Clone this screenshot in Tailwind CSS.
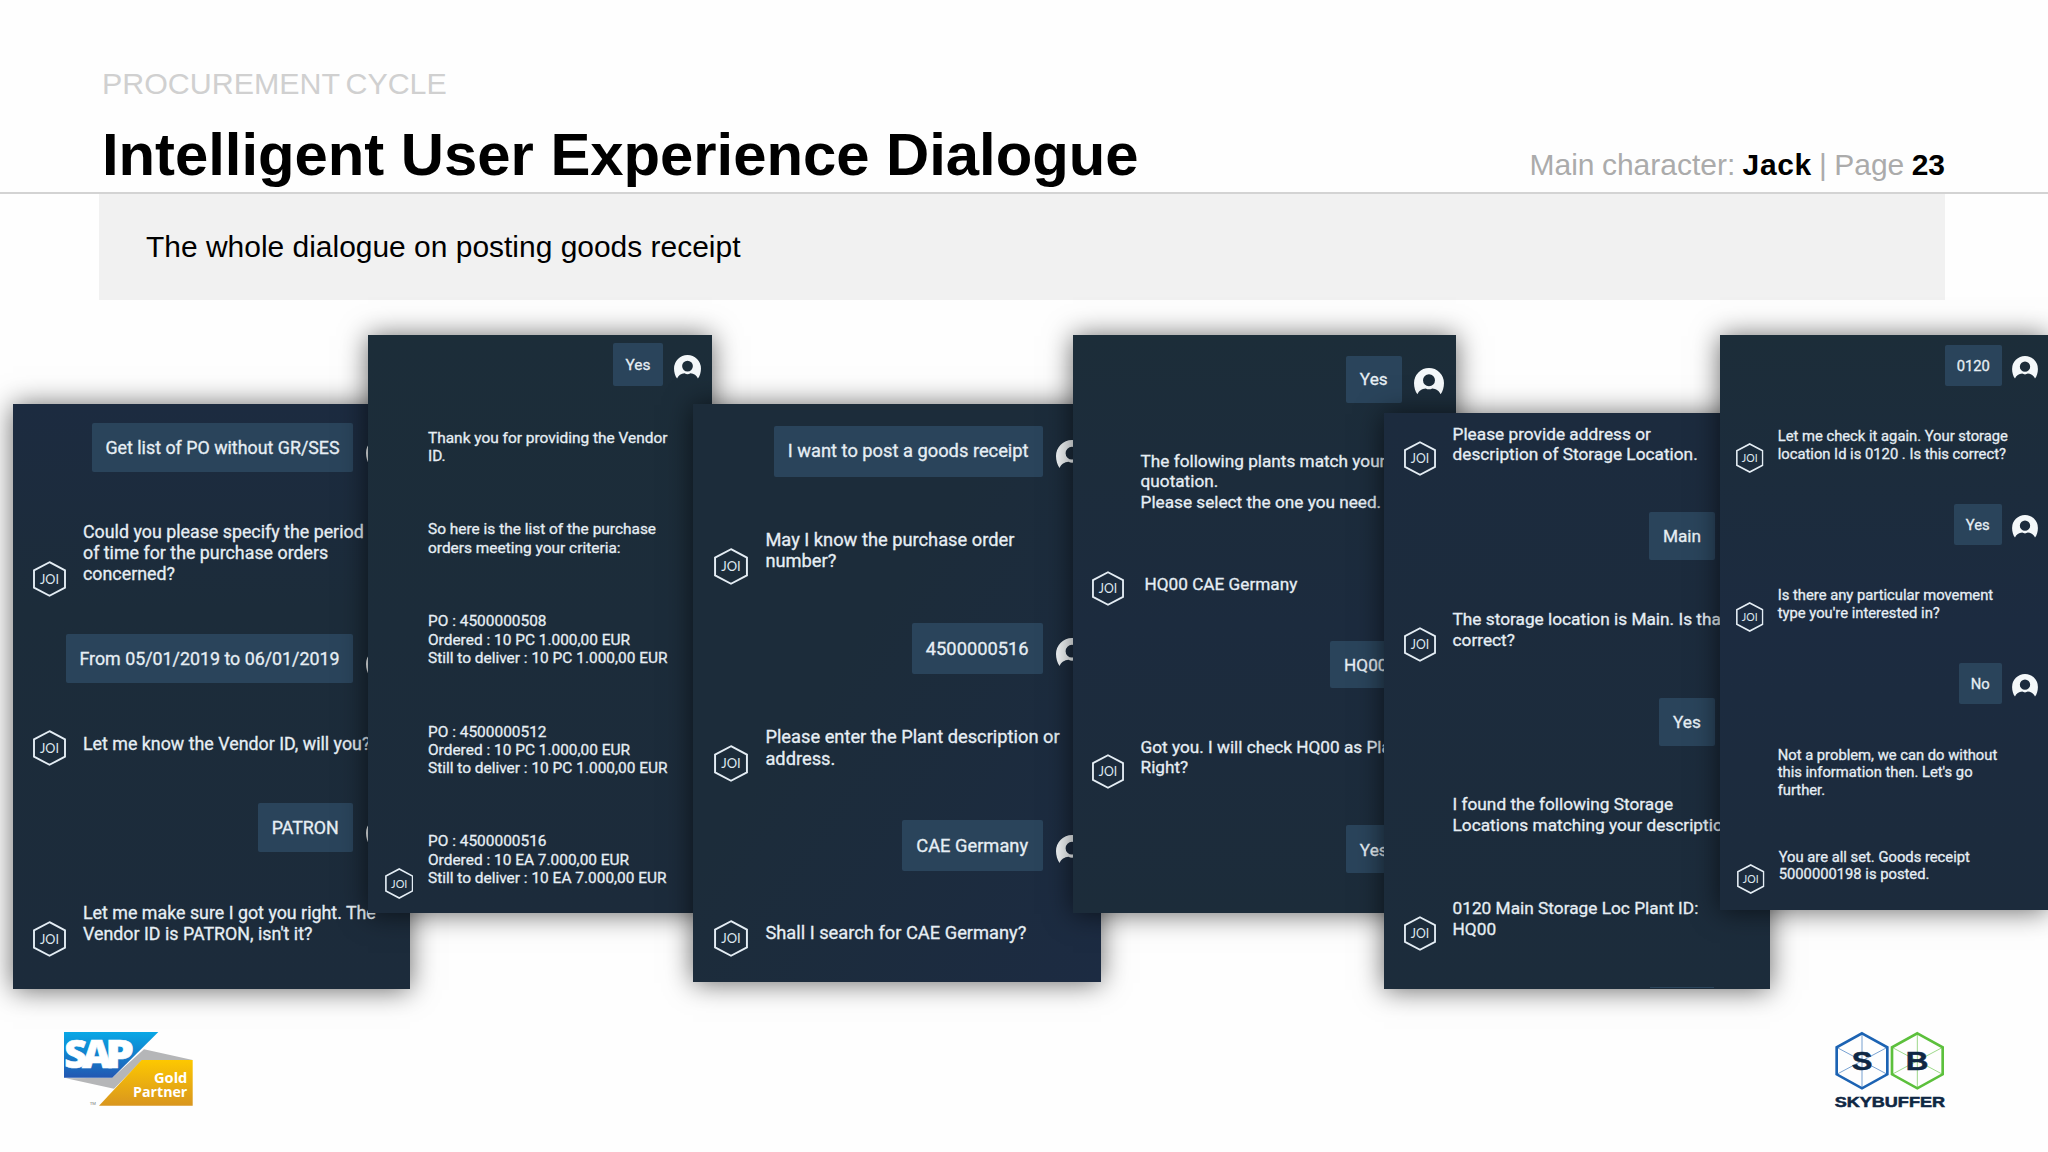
<!DOCTYPE html>
<html lang="en">
<head>
<meta charset="utf-8">
<title>Intelligent User Experience Dialogue</title>
<script src="https://cdn.jsdelivr.net/npm/@tailwindcss/browser@4"></script>
</head>
<body class="w-[2048px] h-[1152px] overflow-hidden bg-[#fefefe] font-['Liberation_Sans',Arial,sans-serif] text-black">

<!-- Shared symbols -->
<svg class="hidden">
  <symbol id="joi" viewBox="0 0 33 36">
    <polygon points="16.5,1.2 32,9.4 32,26.6 16.5,34.8 1,26.6 1,9.4" fill="none" stroke="#e4edf4" stroke-width="1.9"/>
    <text x="16.5" y="22.8" text-anchor="middle" textLength="19" lengthAdjust="spacingAndGlyphs" font-family="Lato, sans-serif" font-size="13.6" fill="#dfe8ef">JOI</text>
  </symbol>
  <symbol id="user" viewBox="0 0 32 28.5">
    <path fill="#f4f8fa" fill-rule="evenodd" d="M3.6 28C1.3 25 0 20.500 0 16a16 16 0 0 1 32 0C32 20.500 30.700 25 28.400 28C27 24.500 23.500 22 19.500 21.800Q16 23.800 12.500 21.800C8.500 22 5 24.500 3.600 28ZM16 6.800a6.400 6.400 0 1 0 0 12.800a6.400 6.400 0 1 0 0-12.800Z"/>
  </symbol>
</svg>

<div class="flex flex-col h-full">
  <header class="flex flex-col h-[194px] shrink-0 border-b-2 border-[#d3d3d3] pl-[102px] pr-[103px]">
    <div class="mt-[65px] h-[36px] leading-[36px] text-[30.4px] [word-spacing:-2.5px] text-[#d0d0d0]">PROCUREMENT CYCLE</div>
    <div class="flex justify-between items-baseline mt-[18.500px] leading-[70px]">
      <h1 class="text-[59.85px] font-bold whitespace-nowrap tracking-[-0.030px]">Intelligent User Experience Dialogue</h1>
      <div class="text-[30px] [word-spacing:-1px] text-[#ababab] whitespace-nowrap">Main character: <b class="text-black tracking-[0.600px]">Jack</b> | Page <b class="text-black">23</b></div>
    </div>
  </header>

  <div class="ml-[99px] mr-[103px] h-[106px] shrink-0 bg-[#f1f1f1] flex items-center pt-[1px] pl-[47px] text-[29.96px]">The whole dialogue on posting goods receipt</div>

  <!-- Overlapping chat windows -->
  <main class="relative h-[710px] shrink-0 font-[Roboto,sans-serif] text-[#e6eef4] whitespace-nowrap [&_p]:pl-[1px] [-webkit-text-stroke:0.3px_#e6eef4]">

    <section class="absolute left-[12.500px] top-[104px] w-[397.500px] h-[584.500px] bg-linear-to-b from-[#1c2b40] via-[#1c2c3a] via-35% to-[#1c2b3b] shadow-[0_1px_26px_rgba(0,0,0,0.6)] flex flex-col text-[17.84px] leading-[21px]">
      <div class="flex justify-end h-[49px] mt-[19px] pr-[12px] gap-[13px]"><div class="w-[261px] rounded-xs bg-[#2a445b] text-center leading-[49px]">Get list of PO without GR/SES</div><svg class="w-[32px] h-[28.500px] mt-[14px]"><use href="#user"/></svg></div>
      <div class="flex h-[63px] mt-[49.400px] pl-[20.500px]"><svg class="w-[33px] h-[36px] mt-[39.600px] mr-[16px] shrink-0"><use href="#joi"/></svg><p>Could you please specify the period<br>of time for the purchase orders<br>concerned?</p></div>
      <div class="flex justify-end h-[49px] mt-[49.600px] pr-[12px] gap-[13px]"><div class="w-[287px] rounded-xs bg-[#2a445b] text-center leading-[49px]">From 05/01/2019 to 06/01/2019</div><svg class="w-[32px] h-[28.500px] mt-[14px]"><use href="#user"/></svg></div>
      <div class="flex h-[21px] mt-[50.400px] pl-[20.500px]"><svg class="w-[33px] h-[36px] -mt-[3px] mr-[16px] shrink-0"><use href="#joi"/></svg><p>Let me know the Vendor ID, will you?</p></div>
      <div class="flex justify-end h-[49px] mt-[49.100px] pr-[12px] gap-[13px]"><div class="w-[95.500px] rounded-xs bg-[#2a445b] text-center leading-[49px]">PATRON</div><svg class="w-[32px] h-[28.500px] mt-[14px]"><use href="#user"/></svg></div>
      <div class="flex h-[42px] mt-[49.900px] pl-[20.500px]"><svg class="w-[33px] h-[36px] mt-[18.600px] mr-[16px] shrink-0"><use href="#joi"/></svg><p>Let me make sure I got you right. The<br>Vendor ID is PATRON, isn't it?</p></div>
    </section>

    <section class="absolute left-[367.500px] top-[35.400px] w-[344.500px] h-[578px] bg-linear-to-b from-[#1c2d39] to-[#1c2b3b] shadow-[0_1px_26px_rgba(0,0,0,0.6)] flex flex-col text-[15.44px] leading-[18.400px]">
      <div class="flex justify-end h-[43px] mt-[7.400px] pr-[11px] gap-[11px]"><div class="w-[50px] rounded-xs bg-[#2a445b] text-center leading-[44px]">Yes</div><svg class="w-[27px] h-[24px] mt-[12px]"><use href="#user"/></svg></div>
      <p class="ml-[59.500px] mt-[43px]">Thank you for providing the Vendor<br>ID.</p>
      <p class="ml-[59.500px] mt-[54.700px]">So here is the list of the purchase<br>orders meeting your criteria:</p>
      <p class="ml-[59.500px] mt-[55.400px]">PO : 4500000508<br>Ordered : 10 PC 1.000,00 EUR<br>Still to deliver : 10 PC 1.000,00 EUR</p>
      <p class="ml-[59.500px] mt-[54.800px]">PO : 4500000512<br>Ordered : 10 PC 1.000,00 EUR<br>Still to deliver : 10 PC 1.000,00 EUR</p>
      <div class="flex h-[55.200px] mt-[54.600px] pl-[17px]"><svg class="w-[28.500px] h-[31px] mt-[35.500px] mr-[14px] shrink-0"><use href="#joi"/></svg><p>PO : 4500000516<br>Ordered : 10 EA 7.000,00 EUR<br>Still to deliver : 10 EA 7.000,00 EUR</p></div>
    </section>

    <section class="absolute left-[692.700px] top-[104.400px] w-[408.300px] h-[578px] bg-linear-to-br from-[#1c2c3a] from-40% to-[#1c2b42] shadow-[0_1px_26px_rgba(0,0,0,0.6)] flex flex-col text-[18.3px] leading-[21.800px]">
      <div class="flex justify-end h-[50.500px] mt-[21.800px] pr-[13px] gap-[13.300px]"><div class="w-[269px] rounded-xs bg-[#2a445b] text-center leading-[50.500px]">I want to post a goods receipt</div><svg class="w-[32px] h-[28.500px] mt-[14px]"><use href="#user"/></svg></div>
      <div class="flex h-[43.600px] mt-[52px] pl-[21px]"><svg class="w-[34px] h-[37px] mt-[19px] mr-[16.700px] shrink-0"><use href="#joi"/></svg><p>May I know the purchase order<br>number?</p></div>
      <div class="flex justify-end h-[51px] mt-[50.300px] pr-[13px] gap-[13.300px]"><div class="w-[131px] rounded-xs bg-[#2a445b] text-center leading-[51px]">4500000516</div><svg class="w-[32px] h-[28.500px] mt-[15px]"><use href="#user"/></svg></div>
      <div class="flex h-[43.600px] mt-[52.200px] pl-[21px]"><svg class="w-[34px] h-[37px] mt-[19px] mr-[16.700px] shrink-0"><use href="#joi"/></svg><p>Please enter the Plant description or<br>address.</p></div>
      <div class="flex justify-end h-[50.500px] mt-[50.800px] pr-[13px] gap-[13.300px]"><div class="w-[141px] rounded-xs bg-[#2a445b] text-center leading-[52px]">CAE Germany</div><svg class="w-[32px] h-[28.500px] mt-[15px]"><use href="#user"/></svg></div>
      <div class="flex h-[21.800px] mt-[51.600px] pl-[21px]"><svg class="w-[34px] h-[37px] -mt-[2px] mr-[16.700px] shrink-0"><use href="#joi"/></svg><p>Shall I search for CAE Germany?</p></div>
    </section>

    <section class="absolute left-[1073px] top-[35.400px] w-[383px] h-[578px] bg-linear-to-b from-[#1c2d39] via-[#1c2b3e] to-[#1c2c3a] shadow-[0_1px_26px_rgba(0,0,0,0.6)] flex flex-col text-[17.2px] leading-[20.400px]">
      <div class="flex justify-end h-[47px] mt-[20.800px] pr-[12px] gap-[12.500px]"><div class="w-[55.500px] rounded-xs bg-[#2a445b] text-center leading-[47px]">Yes</div><svg class="w-[30px] h-[26.700px] mt-[12.300px]"><use href="#user"/></svg></div>
      <p class="ml-[66.600px] mt-[47.700px]">The following plants match your<br>quotation.<br>Please select the one you need.</p>
      <div class="flex h-[20.400px] mt-[61.800px] pl-[19px]"><svg class="w-[32px] h-[35px] -mt-[2.600px] mr-[19.500px] shrink-0"><use href="#joi"/></svg><p>HQ00 CAE Germany</p></div>
      <div class="flex justify-end h-[47px] mt-[47.100px] pr-[12px] gap-[12.500px]"><div class="w-[71.500px] rounded-xs bg-[#2a445b] text-center leading-[48px]">HQ00</div><svg class="w-[30px] h-[26.700px] mt-[12.500px]"><use href="#user"/></svg></div>
      <div class="flex h-[40.800px] mt-[48.200px] pl-[19px]"><svg class="w-[32px] h-[35px] mt-[17.800px] mr-[15.600px] shrink-0"><use href="#joi"/></svg><p>Got you. I will check HQ00 as Plant.<br>Right?</p></div>
      <div class="flex justify-end h-[48px] mt-[47.400px] pr-[12px] gap-[12.500px]"><div class="w-[55.500px] rounded-xs bg-[#2a445b] text-center leading-[50px]">Yes</div><svg class="w-[30px] h-[26.700px] mt-[12.500px]"><use href="#user"/></svg></div>
    </section>

    <section class="absolute left-[1384px] top-[112.500px] w-[386px] h-[576px] bg-linear-to-b from-[#1c2b3e] to-[#1c2c3b] shadow-[0_1px_26px_rgba(0,0,0,0.6)] flex flex-col text-[17.28px] leading-[20.500px]">
      <div class="flex h-[41px] mt-[11.200px] pl-[20px]"><svg class="w-[32px] h-[35px] mt-[17.600px] mr-[15.500px] shrink-0"><use href="#joi"/></svg><p>Please provide address or<br>description of Storage Location.</p></div>
      <div class="flex justify-end h-[48px] mt-[47.300px] pr-[12.500px] gap-[12.500px]"><div class="w-[66px] rounded-xs bg-[#2a445b] text-center leading-[49px]">Main</div><svg class="w-[30px] h-[26.700px] mt-[12.500px]"><use href="#user"/></svg></div>
      <div class="flex h-[41px] mt-[49.400px] pl-[20px]"><svg class="w-[32px] h-[35px] mt-[18px] mr-[15.500px] shrink-0"><use href="#joi"/></svg><p>The storage location is Main. Is that<br>correct?</p></div>
      <div class="flex justify-end h-[48px] mt-[47.600px] pr-[12.500px] gap-[12.500px]"><div class="w-[56px] rounded-xs bg-[#2a445b] text-center leading-[49px]">Yes</div><svg class="w-[30px] h-[26.700px] mt-[12.500px]"><use href="#user"/></svg></div>
      <p class="ml-[67.500px] mt-[48.500px]">I found the following Storage<br>Locations matching your description</p>
      <div class="flex h-[41px] mt-[63px] pl-[20px]"><svg class="w-[32px] h-[35px] mt-[17.600px] mr-[15.500px] shrink-0"><use href="#joi"/></svg><p>0120 Main Storage Loc Plant ID:<br>HQ00</p></div>
      <div class="flex justify-end h-[1px] mt-[48px] pr-[56px]"><div class="w-[64px] bg-[#2a445b]"></div></div>
    </section>

    <section class="absolute left-[1720px] top-[35.400px] w-[328px] h-[575px] bg-linear-to-b from-[#1c2d39] via-[#1c2b40] to-[#1c2b3c] shadow-[0_1px_26px_rgba(0,0,0,0.6)] flex flex-col text-[14.77px] leading-[17.600px]">
      <div class="flex justify-end h-[41px] mt-[9.400px] pr-[10px] gap-[10.500px]"><div class="w-[56.500px] rounded-xs bg-[#2a445b] text-center leading-[42px]">0120</div><svg class="w-[26px] h-[23px] mt-[11.500px]"><use href="#user"/></svg></div>
      <div class="flex h-[35.200px] mt-[42.200px] pl-[16px]"><svg class="w-[27.500px] h-[30px] mt-[15px] mr-[13.200px] shrink-0"><use href="#joi"/></svg><p>Let me check it again. Your storage<br>location Id is 0120 . Is this correct?</p></div>
      <div class="flex justify-end h-[41px] mt-[40.800px] pr-[10px] gap-[10.500px]"><div class="w-[47.500px] rounded-xs bg-[#2a445b] text-center leading-[42px]">Yes</div><svg class="w-[26px] h-[23px] mt-[11.500px]"><use href="#user"/></svg></div>
      <div class="flex h-[35.200px] mt-[42.100px] pl-[16px]"><svg class="w-[27.500px] h-[30px] mt-[15px] mr-[13.200px] shrink-0"><use href="#joi"/></svg><p>Is there any particular movement<br>type you're interested in?</p></div>
      <div class="flex justify-end h-[41px] mt-[40.400px] pr-[10px] gap-[10.500px]"><div class="w-[42.500px] rounded-xs bg-[#2a445b] text-center leading-[42px]">No</div><svg class="w-[26px] h-[23px] mt-[11.500px]"><use href="#user"/></svg></div>
      <p class="ml-[56.700px] mt-[43px]">Not a problem, we can do without<br>this information then. Let's go<br>further.</p>
      <div class="flex h-[35.200px] mt-[49.400px] pl-[17px]"><svg class="w-[27.500px] h-[30px] mt-[15px] mr-[13.200px] shrink-0"><use href="#joi"/></svg><p>You are all set. Goods receipt<br>5000000198 is posted.</p></div>
    </section>
  </main>

  <footer class="flex justify-between pl-[40px] pr-[78px]">
    <svg class="w-[180px] h-[120px]" viewBox="0 0 540 360">
      <defs>
        <linearGradient id="blue" x1="0" y1="0" x2="0" y2="1"><stop offset="0" stop-color="#08a8e6"/><stop offset="0.500" stop-color="#1480cc"/><stop offset="1" stop-color="#2257b2"/></linearGradient>
        <linearGradient id="gold" x1="0" y1="0" x2="0" y2="1"><stop offset="0" stop-color="#fdc800"/><stop offset="1" stop-color="#d9961f"/></linearGradient>
      </defs>
      <polygon points="312,118 458,150 305,152 222,236 78,205 217,203" fill="#b5b6b8"/>
      <polygon points="72,66 355,66 217,203 72,203" fill="url(#blue)"/>
      <polygon points="305,150 458,150 458,287 177,287" fill="url(#gold)"/>
      <g font-family="Open Sans, sans-serif" font-weight="800" font-size="114" fill="#fff" stroke="#fff" stroke-width="2">
        <text x="73" y="175" textLength="68" lengthAdjust="spacingAndGlyphs">S</text>
        <text x="126" y="175" textLength="88" lengthAdjust="spacingAndGlyphs">A</text>
        <text x="196" y="175" textLength="86" lengthAdjust="spacingAndGlyphs">P</text>
      </g>
      <text x="342" y="220" textLength="100" lengthAdjust="spacingAndGlyphs" font-family="Open Sans, sans-serif" font-weight="700" font-size="43" fill="#fff">Gold</text>
      <text x="279" y="260" textLength="163" lengthAdjust="spacingAndGlyphs" font-family="Open Sans, sans-serif" font-weight="700" font-size="43" fill="#fff">Partner</text>
      <text x="149" y="286" textLength="19" lengthAdjust="spacingAndGlyphs" font-family="Liberation Sans, sans-serif" font-size="12" fill="#777">TM</text>
    </svg>
    <svg class="w-[160px] h-[120px]" viewBox="0 0 480 360">
      <g stroke="#1c63b3" stroke-width="1.800" fill="none">
        <path d="M156 70V235M80 112L232 193M232 112L80 193"/>
        <polygon points="156,70 232,112 232,193 156,235 80,193 80,112" stroke-width="8"/>
      </g>
      <g stroke="#5cc03c" stroke-width="1.800" fill="none">
        <path d="M322 70V235M246 112L398 193M398 112L246 193"/>
        <polygon points="322,70 398,112 398,193 322,235 246,193 246,112" stroke-width="8"/>
      </g>
      <g font-family="Liberation Sans, sans-serif" font-weight="700" fill="#0f2744" stroke="#0f2744" stroke-width="1.500">
        <text x="125" y="180" font-size="76" textLength="62" lengthAdjust="spacingAndGlyphs">S</text>
        <text x="287" y="180" font-size="76" textLength="68" lengthAdjust="spacingAndGlyphs">B</text>
        <text x="74" y="292" font-size="42" textLength="331" lengthAdjust="spacingAndGlyphs">SKYBUFFER</text>
      </g>
    </svg>
  </footer>
</div>
</body>
</html>
